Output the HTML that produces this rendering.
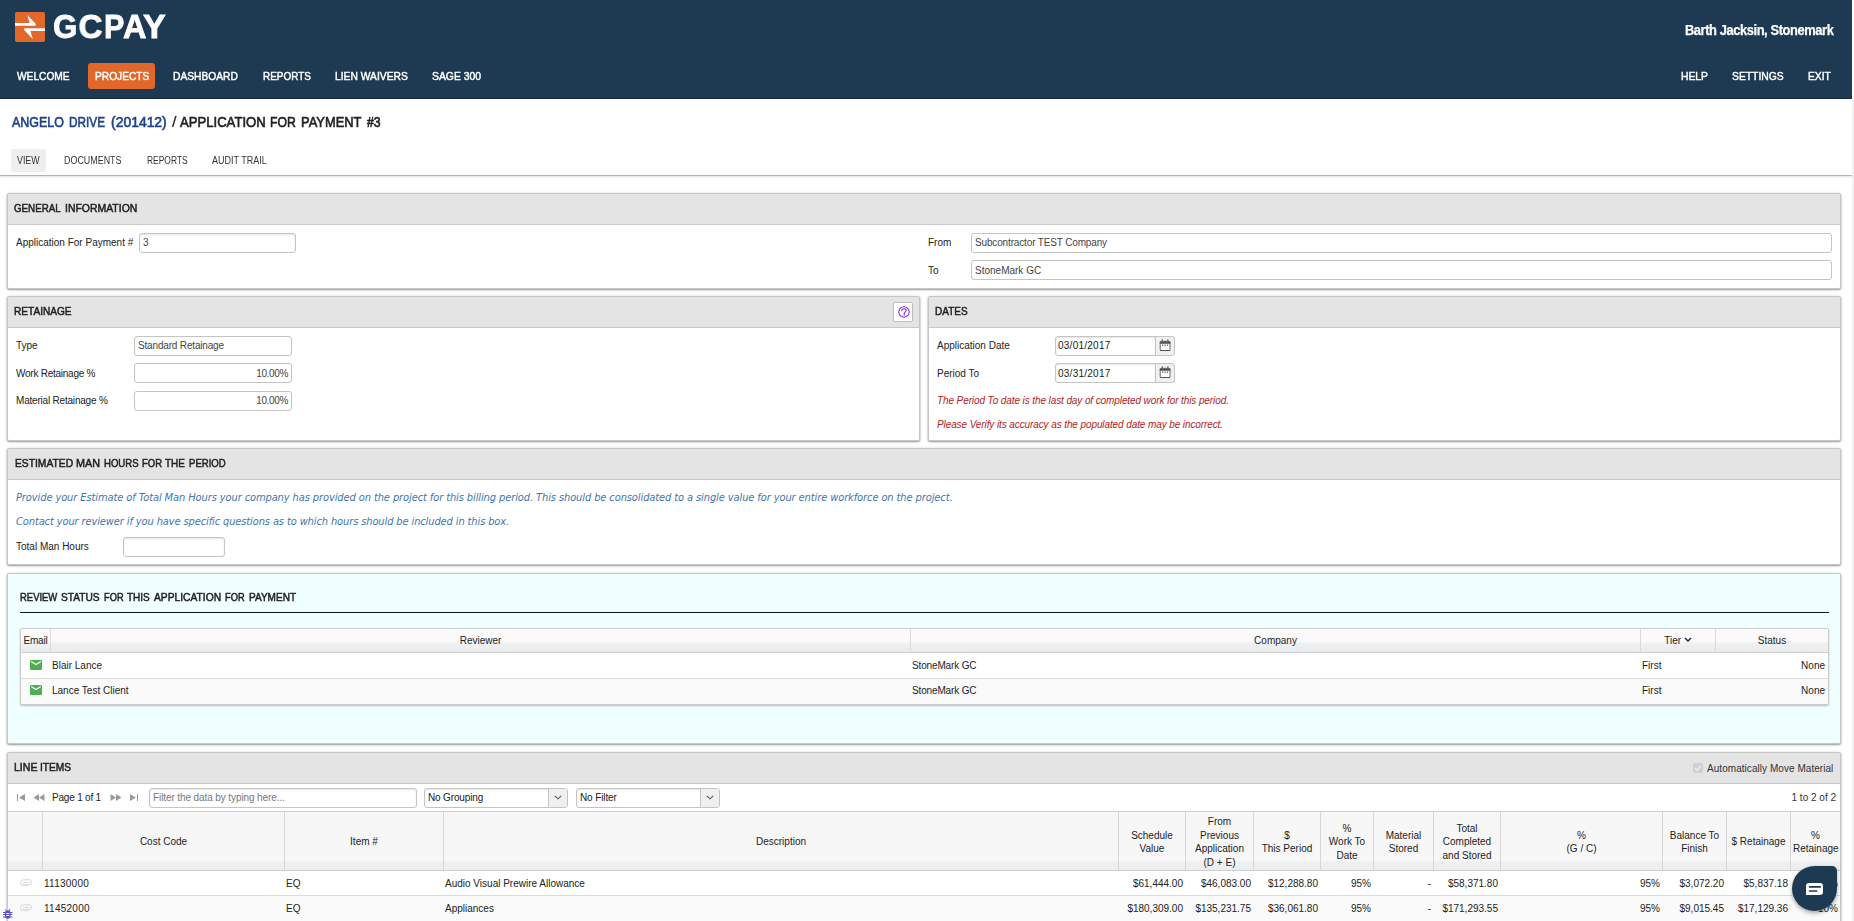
<!DOCTYPE html>
<html lang="en">
<head>
<meta charset="utf-8">
<title>GCPAY - Application For Payment #3</title>
<style>
*{box-sizing:border-box;}
html,body{margin:0;padding:0;}
body{width:1854px;height:921px;overflow:hidden;background:#fff;position:relative;
 font-family:"Liberation Sans",sans-serif;font-size:10px;color:#222;}
.abs{position:absolute;}
.t{position:absolute;white-space:nowrap;line-height:14px;height:14px;}
/* header */
#hdr{position:absolute;left:0;top:0;width:1852px;height:99px;background:#1d3a52;border-bottom:1px solid #12293d;}
#rstrip{position:absolute;left:1852px;top:99px;width:2px;height:822px;background:#f1f1f1;}
#brand{position:absolute;left:0;top:8px;width:180px;height:38px;line-height:38px;font-size:33px;font-weight:bold;color:#fff;-webkit-text-stroke:0.8px #fff;white-space:nowrap;}
#brand b{position:absolute;top:0;transform-origin:0 50%;transform:scaleX(var(--s));}
.nav{position:absolute;top:63px;height:26px;line-height:26px;color:#fff;font-size:11px;font-weight:normal;-webkit-text-stroke:0.45px #fff;white-space:nowrap;transform-origin:0 50%;transform:scaleX(var(--s,.92));}
#navon{position:absolute;left:88px;top:63px;width:67px;height:26px;background:#e2672a;border-radius:3px;}
#user{position:absolute;right:19px;top:20px;-webkit-text-stroke:.25px #fff;height:20px;line-height:20px;color:#fff;font-size:14px;font-weight:bold;letter-spacing:-0.44px;white-space:nowrap;transform-origin:100% 50%;transform:scaleX(.92);}
/* title + tabs */
#ttl{position:absolute;left:0;top:112px;width:400px;height:20px;line-height:20px;font-size:14px;font-weight:normal;-webkit-text-stroke:0.6px;color:#222;white-space:nowrap;}
#ttl a{color:#1e4288;text-decoration:none;}
#ttl .w{position:absolute;top:0;transform-origin:0 50%;transform:scaleX(var(--s));}
.tab{position:absolute;top:149px;height:23px;line-height:23px;font-size:10px;color:#333;white-space:nowrap;transform-origin:0 50%;transform:scaleX(var(--s,.93));}
#tabon{position:absolute;left:11px;top:149px;width:35px;height:23px;background:#eee;border-radius:2px;}
#tabline{position:absolute;left:0;top:175px;width:1852px;height:1px;background:#b4b4b4;box-shadow:0 1px 2px rgba(0,0,0,.18);}
/* panels */
.panel{position:absolute;background:#fff;border:1px solid #c6c6c6;border-radius:2px;box-shadow:0 1px 2px rgba(0,0,0,.38),0 0 3px rgba(0,0,0,.10);}
.ph{position:absolute;left:0;top:0;right:0;height:31px;background:#e4e4e4;border-bottom:1px solid #c9c9c9;}
.ph .w,#rev h3 .w{position:absolute;top:-1px;line-height:30px;font-size:11px;font-weight:normal;-webkit-text-stroke:0.5px;color:#222;white-space:nowrap;transform-origin:0 50%;transform:scaleX(var(--s,.935));}
.inp{position:absolute;height:20px;border:1px solid #c4c4c4;border-radius:3px;background:#fff;line-height:18px;padding:0 3px;color:#444;white-space:nowrap;overflow:hidden;
 box-shadow:inset 0 1px 2px rgba(0,0,0,.10);}
.inp.ro{box-shadow:none;}
.inp.r{text-align:right;padding-right:3px;letter-spacing:-0.35px;}
.inp.dn{padding-top:1px;}
.lbl{position:absolute;line-height:20px;height:20px;white-space:nowrap;color:#222;}

.help{position:absolute;width:20px;height:20px;background:#fff;border:1px solid #bdbdbd;border-radius:2px;}
.ital{position:absolute;white-space:nowrap;font-style:italic;line-height:14px;height:14px;}
.red{color:#b22222;font-size:10px;letter-spacing:-0.1px;}
.blue{color:#3e76ae;font-family:"DejaVu Sans Condensed","DejaVu Sans",sans-serif;font-size:11px;letter-spacing:-0.115px;}
.calbtn{position:absolute;width:20px;height:20px;border:1px solid #c4c4c4;border-left:1px solid #c4c4c4;border-radius:0 3px 3px 0;background:#f0f0f0;}
.dinp{border-radius:3px 0 0 3px;color:#222;padding:0 0 0 2px;letter-spacing:.25px;}
/* review */
#rev{background:#f0ffff;}
#rev h3{position:absolute;left:0;top:9px;margin:0;height:30px;width:400px;font-weight:normal;}
#rev .hr{position:absolute;left:12px;top:38px;width:1809px;height:1px;background:#111;}
.grid{position:absolute;border-collapse:separate;border-spacing:0;table-layout:fixed;font-size:10px;color:#222;}
.grid th{font-weight:normal;text-align:center;padding:0 2px;border-left:1px solid #dadada;background:linear-gradient(#fafafa 0,#fafafa 12px,#eff0f2 14.5px,#ebebed 23px);border-bottom:1px solid #cfcfcf;overflow:hidden;}
.grid th:first-child{border-left:0;}
.grid td{padding:0 2px;white-space:nowrap;overflow:hidden;border-bottom:1px solid #dcdcdc;}
.grid tr.alt td{background:#fafafa;}
.grid td.r{text-align:right;}
#revtbl{left:12px;top:54px;width:1809px;border:1px solid #cdcdcd;border-radius:2px;box-shadow:0 1px 2px rgba(0,0,0,.25);background:#fff;}
#revtbl th{height:24px;line-height:23px;}
#revtbl td{height:26px;line-height:25px;}
#revtbl tr:last-child td{border-bottom:0;height:25px;line-height:23px;vertical-align:top;}
#revtbl td.r{padding-right:3px;}
.mail{display:inline-block;vertical-align:middle;margin:-2px 0 0 7px;}

/* line items */
#li .pgi{position:absolute;top:41px;height:7px;}
#litbl{left:0;top:58px;width:1832px;}
#litbl th{height:60px;line-height:13.5px;border-top:1px solid #cfcfcf;border-left:1px solid #d6d6d6;padding:2px 2px 0;background:linear-gradient(#f7f7f7 0,#f7f7f7 48px,#eff0f1 50px,#ebecee 59px);}
#litbl th:first-child{border-left:0;}
#litbl td{height:25px;line-height:22px;padding-top:2px;border-bottom:1px solid #dcdcdc;}
#litbl tr:last-child td{height:27px;padding-bottom:2px;}
.sel{position:absolute;height:20px;border:1px solid #c4c4c4;border-radius:3px;background:#fff;line-height:18px;padding:0 3px;color:#222;white-space:nowrap;overflow:hidden;box-shadow:inset 0 1px 2px rgba(0,0,0,.10);}
.sel i{position:absolute;right:0;top:0;width:19px;height:18px;background:#f0f0f0;border-left:1px solid #c4c4c4;}
.sel i svg{position:absolute;left:5px;top:6px;}
.clip{display:inline-block;vertical-align:middle;margin:-3px 0 0 10px;}
#chat{position:absolute;left:1792px;top:866px;width:45px;height:45px;background:#1d3a52;border-radius:50% 5px 50% 50%/50% 5px 50% 50%;box-shadow:0 2px 4px rgba(0,0,0,.35);}
</style>
</head>
<body>
<div id="hdr">
 <svg class="abs" style="left:15px;top:12px" width="30" height="30" viewBox="0 0 30 30">
  <rect x="0" y="0" width="30" height="30" rx="1.8" fill="#e2672a"/>
  <path d="M0 11 H14.6 L12.2 2.9 L20.7 11.7 V13.7 H0 Z" fill="#fff"/>
  <path d="M30 19 H15.4 L17.8 27.1 L9.3 18.3 V16.3 H30 Z" fill="#fff"/>
 </svg>
 <div id="brand"><b style="left:53.3px;--s:0.946">G</b><b style="left:78.4px;--s:1.000">C</b><b style="left:104.1px;--s:0.924">P</b><b style="left:122.8px;--s:0.983">A</b><b style="left:143.2px;--s:1.032">Y</b></div>
 <div class="nav" style="left:17px;--s:.925">WELCOME</div>
 <div id="navon"></div>
 <div class="nav" style="left:94.5px;--s:.925">PROJECTS</div>
 <div class="nav" style="left:173px;--s:.93">DASHBOARD</div>
 <div class="nav" style="left:262.5px;--s:.905">REPORTS</div>
 <div class="nav" style="left:335px;--s:.935">LIEN WAIVERS</div>
 <div class="nav" style="left:432px;--s:.945">SAGE 300</div>
 <div id="user">Barth Jacksin, Stonemark</div>
 <div class="nav" style="left:1680.5px;--s:.94">HELP</div>
 <div class="nav" style="left:1732px;--s:.94">SETTINGS</div>
 <div class="nav" style="left:1808px;--s:.935">EXIT</div>
</div>
<div id="rstrip"></div>

<div id="ttl"><a><span class="w" style="left:12.4px;--s:.888">ANGELO</span> <span class="w" style="left:69.1px;--s:.842">DRIVE</span> <span class="w" style="left:110.5px;--s:.995">(201412)</span></a> <span class="w" style="left:171.7px;--s:1.15;-webkit-text-stroke:0.2px">/</span> <span class="w" style="left:180.3px;--s:.936">APPLICATION</span> <span class="w" style="left:270px;--s:.872">FOR</span> <span class="w" style="left:300.5px;--s:.921">PAYMENT</span> <span class="w" style="left:367.4px;--s:.876">#3</span></div>
<div id="tabon"></div>
<div class="tab" style="left:17px;--s:.886">VIEW</div>
<div class="tab" style="left:64.3px;--s:.892">DOCUMENTS</div>
<div class="tab" style="left:146.6px;--s:.845">REPORTS</div>
<div class="tab" style="left:212px;--s:.9">AUDIT TRAIL</div>
<div id="tabline"></div>

<!-- GENERAL INFORMATION -->
<div class="panel" style="left:7px;top:193px;width:1834px;height:96px">
 <div class="ph"><span class="w" style="left:6.4px;--s:0.887">GENERAL</span> <span class="w" style="left:56.8px;--s:0.949">INFORMATION</span></div>
 <div class="lbl" style="left:8px;top:39px">Application For Payment #</div>
 <div class="inp" style="left:131px;top:39px;width:157px">3</div>
 <div class="lbl" style="left:920px;top:39px">From</div>
 <div class="inp ro" style="left:963px;top:39px;width:861px;letter-spacing:-0.15px">Subcontractor TEST Company</div>
 <div class="lbl" style="left:920px;top:67px">To</div>
 <div class="inp ro dn" style="left:963px;top:66px;width:861px">StoneMark GC</div>
</div>

<!-- RETAINAGE -->
<div class="panel" style="left:7px;top:296px;width:913px;height:145px">
 <div class="ph"><span class="w" style="left:6.4px;--s:0.917">RETAINAGE</span></div>
 <div class="help" style="left:885px;top:5px">
  <svg class="abs" style="left:3.5px;top:3px" width="12" height="12" viewBox="0 0 12 12"><circle cx="6" cy="6" r="5.2" fill="none" stroke="#8a2be2" stroke-width="1.05"/><path d="M3.8 4.6 C3.8 3.3 4.9 2.7 6 2.7 C7.3 2.7 8.2 3.4 8.2 4.5 C8.2 5.8 6.2 5.9 6.2 7.6 V9.3" fill="none" stroke="#8a2be2" stroke-width="1.1" stroke-linecap="round"/></svg>
 </div>
 <div class="lbl" style="left:8px;top:39px">Type</div>
 <div class="inp ro" style="left:126px;top:39px;width:158px;letter-spacing:-0.17px">Standard Retainage</div>
 <div class="lbl" style="left:8px;top:67px;letter-spacing:-0.25px">Work Retainage %</div>
 <div class="inp ro r dn" style="left:126px;top:66px;width:158px">10.00%</div>
 <div class="lbl" style="left:8px;top:94px;letter-spacing:-0.2px">Material Retainage %</div>
 <div class="inp ro r" style="left:126px;top:94px;width:158px">10.00%</div>
</div>

<!-- DATES -->
<div class="panel" style="left:928px;top:296px;width:913px;height:145px">
 <div class="ph"><span class="w" style="left:6.0px;--s:0.908">DATES</span></div>
 <div class="lbl" style="left:8px;top:39px">Application Date</div>
 <div class="inp dinp" style="left:126px;top:39px;width:101px">03/01/2017</div>
 <div class="calbtn" style="left:226px;top:39px"><svg class="abs" style="left:3px;top:2px" width="12" height="13" viewBox="0 0 12 13"><path d="M3.3 0.2v2.2M8.9 0.2v2.2" stroke="#5a5a5a" stroke-width="1.1"/><rect x="1.2" y="2.3" width="9.8" height="9.2" rx="1.1" fill="#fff" stroke="#6a6a6a" stroke-width="1"/><path d="M0.8 2.4h10.6v2.4H0.8z" fill="#555"/><path d="M1 11.5h10.2" stroke="#555" stroke-width="1"/><path d="M3.1 6.3h1.2M5.5 6.3h1.2M7.9 6.3h1.2" stroke="#667" stroke-width="1.5"/></svg></div>
 <div class="lbl" style="left:8px;top:67px">Period To</div>
 <div class="inp dinp dn" style="left:126px;top:66px;width:101px">03/31/2017</div>
 <div class="calbtn" style="left:226px;top:66px"><svg class="abs" style="left:3px;top:2px" width="12" height="13" viewBox="0 0 12 13"><path d="M3.3 0.2v2.2M8.9 0.2v2.2" stroke="#5a5a5a" stroke-width="1.1"/><rect x="1.2" y="2.3" width="9.8" height="9.2" rx="1.1" fill="#fff" stroke="#6a6a6a" stroke-width="1"/><path d="M0.8 2.4h10.6v2.4H0.8z" fill="#555"/><path d="M1 11.5h10.2" stroke="#555" stroke-width="1"/><path d="M3.1 6.3h1.2M5.5 6.3h1.2M7.9 6.3h1.2" stroke="#667" stroke-width="1.5"/></svg></div>
 <div class="ital red" style="left:8px;top:97px">The Period To date is the last day of completed work for this period.</div>
 <div class="ital red" style="left:8px;top:121px">Please Verify its accuracy as the populated date may be incorrect.</div>
</div>

<!-- MAN HOURS -->
<div class="panel" style="left:7px;top:448px;width:1834px;height:117px">
 <div class="ph"><span class="w" style="left:6.5px;--s:0.935">ESTIMATED</span> <span class="w" style="left:68.2px;--s:0.983">MAN</span> <span class="w" style="left:95.5px;--s:0.870">HOURS</span> <span class="w" style="left:134.0px;--s:0.861">FOR</span> <span class="w" style="left:157.0px;--s:0.900">THE</span> <span class="w" style="left:180.5px;--s:0.871">PERIOD</span></div>
 <div class="ital blue" style="left:8px;top:42px;letter-spacing:-0.1px">Provide your Estimate of Total Man Hours your company has provided on the project for this billing period. This should be consolidated to a single value for your entire workforce on the project.</div>
 <div class="ital blue" style="left:8px;top:66px">Contact your reviewer if you have specific questions as to which hours should be included in this box.</div>
 <div class="lbl" style="left:8px;top:88px">Total Man Hours</div>
 <div class="inp" style="left:115px;top:88px;width:102px"></div>
</div>

<!-- REVIEW STATUS -->
<div class="panel" id="rev" style="left:7px;top:573px;width:1834px;height:171px">
 <h3><span class="w" style="left:11.8px;--s:0.859">REVIEW</span> <span class="w" style="left:53.4px;--s:0.924">STATUS</span> <span class="w" style="left:95.9px;--s:0.843">FOR</span> <span class="w" style="left:119.2px;--s:0.908">THIS</span> <span class="w" style="left:145.6px;--s:0.932">APPLICATION</span> <span class="w" style="left:217.3px;--s:0.843">FOR</span> <span class="w" style="left:240.6px;--s:0.912">PAYMENT</span></h3>
 <div class="hr"></div>
 <table class="grid" id="revtbl">
  <colgroup><col style="width:29px"><col style="width:860px"><col style="width:730px"><col style="width:75px"><col></colgroup>
  <tr><th style="letter-spacing:-0.25px;padding:0">Email</th><th>Reviewer</th><th>Company</th><th>Tier <svg width="8" height="6" viewBox="0 0 8 6" style="vertical-align:1px"><path d="M1 1l3 3 3-3" fill="none" stroke="#222" stroke-width="1.4"/></svg></th><th>Status</th></tr>
  <tr><td><svg class="mail" width="12" height="10" viewBox="0 0 12 10"><rect width="12" height="10" rx="1" fill="#4caf50"/><path d="M1.2 1.6L6 4.6l4.8-3" fill="none" stroke="#fff" stroke-width="1.2"/></svg></td><td>Blair Lance</td><td style="letter-spacing:-0.15px">StoneMark GC</td><td>First</td><td class="r">None</td></tr>
  <tr class="alt"><td><svg class="mail" width="12" height="10" viewBox="0 0 12 10"><rect width="12" height="10" rx="1" fill="#4caf50"/><path d="M1.2 1.6L6 4.6l4.8-3" fill="none" stroke="#fff" stroke-width="1.2"/></svg></td><td>Lance Test Client</td><td style="letter-spacing:-0.15px">StoneMark GC</td><td>First</td><td class="r">None</td></tr>
 </table>
</div>

<!-- LINE ITEMS -->
<div class="panel" id="li" style="left:7px;top:752px;width:1834px;height:190px">
 <div class="ph"><span class="w" style="left:6.4px;--s:0.958">LINE</span> <span class="w" style="left:32.4px;--s:0.926">ITEMS</span></div>
 <div class="abs" style="left:1685px;top:10px;width:10px;height:10px;border-radius:2px;background:#d0d0d0"><svg class="abs" style="left:0;top:0" width="10" height="10" viewBox="0 0 10 10"><path d="M2.2 5.2l2 2 3.6-4.6" fill="none" stroke="#efefef" stroke-width="1.5"/></svg></div>
 <div class="lbl" style="left:1699px;top:6px;color:#333;letter-spacing:.05px">Automatically Move Material</div>
 <svg class="pgi" style="left:9px" width="9" height="7" viewBox="0 0 9 7"><path d="M0.5 0v7" stroke="#999" stroke-width="1"/><path d="M8 0v7L2.2 3.5z" fill="#999"/></svg>
 <svg class="pgi" style="left:25px" width="12" height="7" viewBox="0 0 12 7"><path d="M6 0v7L0.5 3.5zM11.5 0v7L6 3.5z" fill="#999"/></svg>
 <div class="lbl" style="left:44px;top:35px;letter-spacing:-0.2px">Page 1 of 1</div>
 <svg class="pgi" style="left:102px" width="12" height="7" viewBox="0 0 12 7"><path d="M0.5 0v7L6 3.5zM6 0v7l5.5-3.5z" fill="#999"/></svg>
 <svg class="pgi" style="left:121px" width="9" height="7" viewBox="0 0 9 7"><path d="M8.5 0v7" stroke="#999" stroke-width="1"/><path d="M1 0v7l5.8-3.5z" fill="#999"/></svg>
 <div class="inp" style="left:141px;top:35px;width:268px;color:#777;letter-spacing:-0.1px;padding-left:3px">Filter the data by typing here...</div>
 <div class="sel" style="left:416px;top:35px;width:144px;letter-spacing:-0.15px">No Grouping<i><svg width="8" height="5" viewBox="0 0 8 5"><path d="M0.8 0.8L4 3.8 7.2 0.8" fill="none" stroke="#555" stroke-width="1.1"/></svg></i></div>
 <div class="sel" style="left:568px;top:35px;width:144px;letter-spacing:-0.12px">No Filter<i><svg width="8" height="5" viewBox="0 0 8 5"><path d="M0.8 0.8L4 3.8 7.2 0.8" fill="none" stroke="#555" stroke-width="1.1"/></svg></i></div>
 <div class="lbl" style="right:4px;top:35px;color:#333">1 to 2 of 2</div>
 <table class="grid" id="litbl">
  <colgroup><col style="width:34px"><col style="width:242px"><col style="width:159px"><col style="width:675px"><col style="width:67px"><col style="width:68px"><col style="width:67px"><col style="width:53px"><col style="width:60px"><col style="width:67px"><col style="width:162px"><col style="width:64px"><col style="width:64px"><col style="width:50px"></colgroup>
  <tr><th></th><th>Cost Code</th><th>Item #</th><th>Description</th><th>Schedule<br>Value</th><th>From<br>Previous<br>Application<br>(D + E)</th><th>$<br>This Period</th><th>%<br>Work To<br>Date</th><th>Material<br>Stored</th><th>Total<br>Completed<br>and Stored</th><th>%<br>(G / C)</th><th>Balance To<br>Finish</th><th>$ Retainage</th><th>%<br>Retainage</th></tr>
  <tr><td><svg class="clip" width="12" height="8" viewBox="0 0 12 8"><path d="M9.5 3.6H4.2a1 1 0 0 0 0 2h5a2.4 2.4 0 0 0 0-4.8H3.4a2.6 2.6 0 0 0 0 5.9h5" fill="none" stroke="#d8d8d8" stroke-width="1"/></svg></td><td style="letter-spacing:.25px">11130000</td><td>EQ</td><td>Audio Visual Prewire Allowance</td><td class="r">$61,444.00</td><td class="r">$46,083.00</td><td class="r">$12,288.80</td><td class="r">95%</td><td class="r">-</td><td class="r">$58,371.80</td><td class="r">95%</td><td class="r">$3,072.20</td><td class="r">$5,837.18</td><td class="r">10%</td></tr>
  <tr class="alt"><td><svg class="clip" width="12" height="8" viewBox="0 0 12 8"><path d="M9.5 3.6H4.2a1 1 0 0 0 0 2h5a2.4 2.4 0 0 0 0-4.8H3.4a2.6 2.6 0 0 0 0 5.9h5" fill="none" stroke="#d8d8d8" stroke-width="1"/></svg></td><td style="letter-spacing:.25px">11452000</td><td>EQ</td><td>Appliances</td><td class="r">$180,309.00</td><td class="r">$135,231.75</td><td class="r">$36,061.80</td><td class="r">95%</td><td class="r">-</td><td class="r">$171,293.55</td><td class="r">95%</td><td class="r">$9,015.45</td><td class="r">$17,129.36</td><td class="r">10%</td></tr>
 </table>
</div>

<div id="chat"><svg class="abs" style="left:14px;top:17px" width="17" height="12" viewBox="0 0 17 12"><path d="M3 0H14A3 3 0 0 1 17 3V9A3 3 0 0 1 14 12H0V3A3 3 0 0 1 3 0Z" fill="#fff"/><path d="M3.6 3.9h10.6M3.6 8h7" stroke="#1d3a52" stroke-width="1.7" stroke-linecap="round"/></svg></div>
<svg class="abs" style="left:3px;top:909px;filter:drop-shadow(0 0 1px #fff)" width="10" height="10" viewBox="0 0 10 10"><path d="M2.300 0.400l1 1.200M7.100 0.400l-1 1.200" stroke="#5b4fc7" stroke-width="1" stroke-linecap="round"/><path d="M4.700 1.300c1.700 0 2.800 1 2.800 2.600v3c0 1.600-1.200 2.800-2.800 2.800s-2.800-1.200-2.800-2.800v-3c0-1.600 1.100-2.600 2.800-2.600z" fill="#5b4fc7"/><path d="M0 3.500h9.400M0 5.500h9.400M0 8h9.400" stroke="#5b4fc7" stroke-width="1"/><path d="M3 4.500h3.400M3 6.500h3.400" stroke="#fff" stroke-width="0.900"/></svg>

</body>
</html>
